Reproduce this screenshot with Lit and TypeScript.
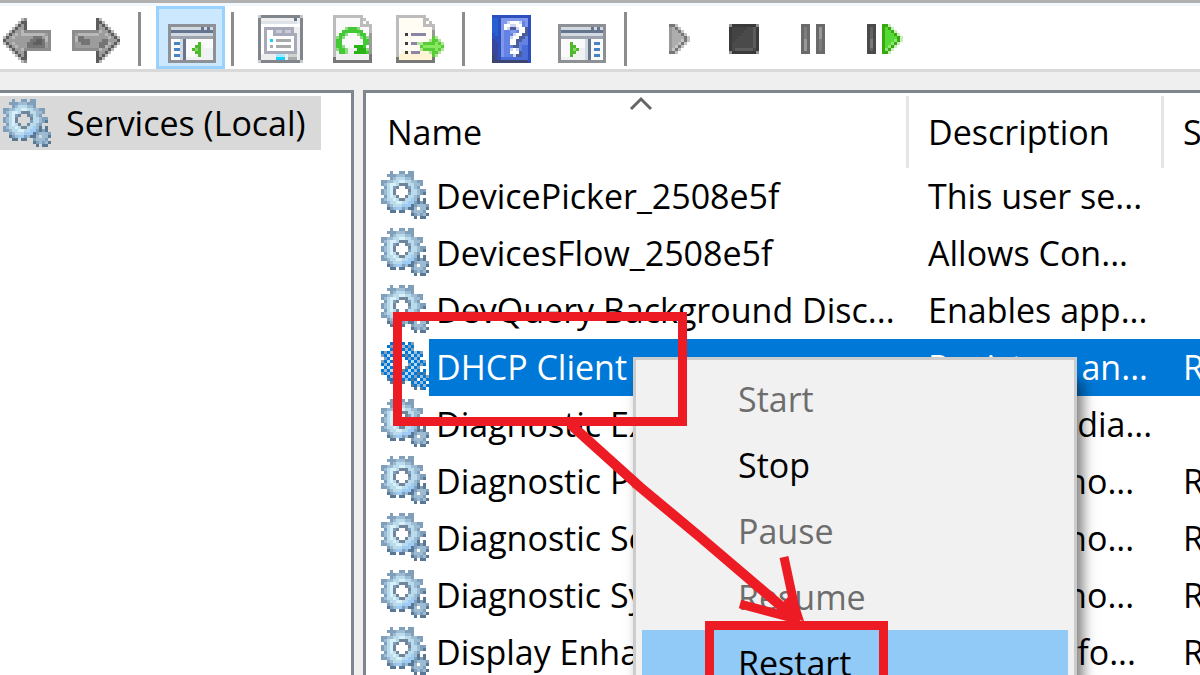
import { LitElement, html, svg, css } from "lit";
import { customElement, property, state } from "lit/decorators.js";
import { classMap } from "lit/directives/class-map.js";

type Sprite = { colors: Record<string, string>; rows: string[] };

const GEAR: Sprite = {
  colors: { o: "#7f9fbb", b: "#9dbcd4", c: "#badbec", w: "#d8f1f9", i: "#71859d", d: "#587896", s: "#9dcbf8" },
  rows: [
    "...o..oo.oo.....",
    "..ooobbbooo.....",
    "...obcccbbo.....",
    "oobbccwwccbboo..",
    "obcwwciiiccbbo..",
    ".ocwoi..iocbo...",
    "obcwi....iccboo.",
    "obcwi....occbod.",
    ".ocwci..iccbo...",
    "obccwciiccsbd.d.",
    "oobccwwccssodod.",
    "..obcccsssdobbbo",
    "..dobssobddb.bbd",
    "...dd.dd..obbbo.",
    "..........dobobd",
    "...........d.dd.",
  ],
};

const BACK: Sprite = {
  colors: { k: "#5c5c5c", g: "#8c8c8c", l: "#b8b8b8", m: "#9c9c9c", d: "#747474", x: "#5f5f5f" },
  rows: [
    "",
    "......lg........",
    ".....lkk........",
    "....lkmk........",
    "...lkmmk........",
    "..lkmmlggggggggg",
    ".lkmlmllllllllmg",
    "lkmlmmmmmmdddmlg",
    "kmmmmmmmmddxxdlg",
    "lkmlmmmmddxxxdmg",
    ".lkmlmmmddddddmg",
    "..lkmmlggggggggg",
    "...lkmmk........",
    "....lkmk........",
    ".....lkk........",
    "......lg........",
  ],
};

const FORWARD: Sprite = {
  colors: BACK.colors,
  rows: [
    "",
    "........kl......",
    "........kkl.....",
    "........kmkl....",
    "........kmmkl...",
    "ggggggggglmmkl..",
    "gmlllllllmmlmkl.",
    "glddmmmmmmmmlmkl",
    "glddddmmmmddmmmk",
    "gmmdddmmmdddlmkl",
    "gmmmmmmmmddlmkl.",
    "ggggggggglmmkl..",
    "........kmmkl...",
    "........kmkl....",
    "........kkl.....",
    "........kl......",
  ],
};

const TREE_PANE: Sprite = {
  colors: { g: "#8d9196", l: "#d3d9e1", n: "#66758f", m: "#9da3ad", w: "#fafafa", v: "#f0f1f2", b: "#4684c4", e: "#4fb92b", f: "#86d768" },
  rows: [
    "", "", "",
    "gggggggggggggggg",
    "gllllllllllnlnlg",
    "gnnnnnnnnnnnnnng",
    "gllllllllllllllg",
    "gmmmmmmmmmmmmmmg",
    "gwwwlnwwwwwwwwwg",
    "gwbblnwwwwewwwwg",
    "gwwwlnwwweevwwwg",
    "gwbblnwwefevvvvg",
    "gwwwlnwwweevvvvg",
    "gwbblnwwwvevvvvg",
    "gwwwlnvvvvvvvvvg",
    "gggggggggggggggg",
  ],
};

const ACTION_PANE: Sprite = {
  colors: TREE_PANE.colors,
  rows: [
    "", "", "",
    "gggggggggggggggg",
    "gllllllllllnlnlg",
    "gnnnnnnnnnnnnnng",
    "gllllllllllllllg",
    "gmmmmmmmmmmmmmmg",
    "gwwwwwwwwlnwwwwg",
    "gwwwewwwwlnwbbwg",
    "gwwweewwwlnwwwwg",
    "gwwwefevvlnwbbwg",
    "gwwweevvvlnwwwwg",
    "gwwwevvvvlnwbbwg",
    "gvvvvvvvvlnwwwwg",
    "gggggggggggggggg",
  ],
};

const PROPERTIES: Sprite = {
  colors: { g: "#80868c", c: "#c8cbcd", l: "#dde3e8", n: "#66758f", v: "#eeeeef", a: "#a7abb9", w: "#ffffff", t: "#c9ccd6", y: "#19d1ff", z: "#a9ecff", s: "#a9abab", q: "#d0d2d2" },
  rows: [
    "cgggggggggggggc.",
    "gvvvvvvvvvvvnvg.",
    "gllllllllllllvg.",
    "gwwwwwwwwwwwwwg.",
    "gwaaaaaaaaaavvg.",
    "gwawwattattavvg.",
    "gwawwaaaaaaaavg.",
    "gwawwwwwwwwwavg.",
    "gwawywssssswavg.",
    "gwawwwwwwwwwavg.",
    "gwawswssssswavg.",
    "gwawwwwwwwwwavg.",
    "gwaaaaaaaaaaavg.",
    "gvvvvvzzzvqqqvg.",
    "gvvvvvyyyvsssvg.",
    "cgggggggggggggc.",
  ],
};

const REFRESH: Sprite = {
  colors: { g: "#bcbcbc", h: "#9a9a9a", k: "#787878", w: "#fafafa", v: "#f0f0f0", e: "#43c936", f: "#8bdb80", d: "#27b414" },
  rows: [
    "..gggggggggg....",
    "..gwwwwwwwwgg...",
    "..gwwwwwwwwgwg..",
    "..gwwwwwwwwgggg.",
    "..gwwwfeeefwwwg.",
    "..gwweeeeeeewwg.",
    "..gweefwwwfeewh.",
    "..gfefwwwwwfefh.",
    "..geewwwwwwweeh.",
    "..geewwwwwwweeh.",
    "..geefwwwdddewh.",
    "..gfeefvvvdddfh.",
    "..gveefvvddddeh.",
    "..gvvvvvvvvvvvk.",
    "..kvvvvvvvvvvvk.",
    "..kkkkkkkkkkkkk.",
  ],
};

const EXPORT: Sprite = {
  colors: { g: "#bcbcbc", h: "#989898", k: "#787878", w: "#fffdf4", v: "#fff4d4", n: "#403c44", p: "#8b86a3", e: "#57cc36", f: "#86e95f", l: "#b2e59b" },
  rows: [
    "gggggggggg......",
    "gwwwwwwwwgg.....",
    "gwwwwwwwwgwg....",
    "gwwwwwwwwgggg...",
    "gwwwwwwwwwwwg...",
    "gwwwwwwwwwwwh...",
    "gwwnwpppppwwh...",
    "gwwwwwwwwwwwel..",
    "gwwwwwwwwwwleel.",
    "gwwnwpplleeeefel",
    "gwwwwwwweffffffe",
    "gwwwwwwwleeeefel",
    "gwvnvpppvvvleel.",
    "gvvvvvvvvvvvel..",
    "kvvvvvvvvvvvk...",
    "kkkkkkkkkkkkk...",
  ],
};

const HELP: Sprite = {
  colors: { a: "#2c4fbd", b: "#2860d3", c: "#36479b", d: "#3b456f", e: "#7f98ec", f: "#6482e3", g: "#4a6dd7", w: "#ffffff", v: "#ccd5f2", s: "#4c5d9a" },
  rows: [
    ".aaaaaaaaaaaaa..",
    ".bbaeeeeeeeeea..",
    ".bbaeevwwwvfea..",
    ".bbaewwvvwwfea..",
    ".bbaewvssvwwsa..",
    ".bbaeffeefwwsa..",
    ".abaefffvwwssa..",
    ".aaaeffvwwssfa..",
    ".caaeffwwssffa..",
    ".ccaeffwwsfffa..",
    ".ccaefffssfgga..",
    ".ccaeffvwvfgga..",
    ".ccaeffwwwsgga..",
    ".dcaefffvssgga..",
    ".dcaggggggggga..",
    ".dddddddddddda..",
  ],
};

const START: Sprite = {
  colors: { k: "#777777", g: "#999999", l: "#c4c4c4", m: "#adadad" },
  rows: [
    "", "", "",
    "......kkl.......",
    "......gmkl......",
    "......gmmkl.....",
    "......gmmmkl....",
    "......gmmmmkl...",
    "......gmmmlkl...",
    "......gmmlkl....",
    "......gmlkl.....",
    "......glkl......",
    "......kkl.......",
  ],
};

const STOP: Sprite = {
  colors: { c: "#929292", k: "#3a3a3a", d: "#434343", m: "#4a4a4a", l: "#5c5c5c" },
  rows: [
    "", "", "",
    "...ckkkkkkkkc...",
    "...kdddddmmlk...",
    "...kddddmmmlk...",
    "...kdddmmmmlk...",
    "...kddmmmmmlk...",
    "...kdmmmmmmlk...",
    "...kmmmmmmmlk...",
    "...kmmmmmmmlk...",
    "...kmllllllmk...",
    "...ckkkkkkkkc...",
  ],
};

const PAUSE: Sprite = {
  colors: { k: "#6a6a6a", m: "#7d7d7d", l: "#999999" },
  rows: [
    "", "", "",
    "....kkk..kkk....",
    "....kmk..klk....",
    "....kmk..klk....",
    "....kmk..klk....",
    "....kmk..klk....",
    "....klk..kmk....",
    "....klk..kmk....",
    "....klk..kmk....",
    "....klk..kmk....",
    "....kkk..kkk....",
  ],
};

const RESTART: Sprite = {
  colors: { k: "#4a4a4a", m: "#636363", l: "#7b7b7b", d: "#37a90b", e: "#55d936", f: "#8fe477", h: "#c8edbd" },
  rows: [
    "", "", "",
    "...kkk..ddh.....",
    "...kmk..dedh....",
    "...kmk..deedh...",
    "...kmk..deeedh..",
    "...kmk..deeeedh.",
    "...klk..deeefdh.",
    "...klk..deefdh..",
    "...klk..defdh...",
    "...kmk..dfdh....",
    "...kkk..ddh.....",
  ],
};

@customElement("pixel-icon")
class PixelIcon extends LitElement {
  @property({ attribute: false }) sprite!: Sprite;
  @property({ type: Boolean }) dithered = false;

  static styles = css`
    :host { display: block; flex: none; width: 48px; height: 48px; }
    .art { display: block; width: 100%; height: 100%; }
  `;

  render() {
    const cells = this.sprite.rows.flatMap((row, y) =>
      [...row].map((key, x) => {
        if (key === ".") return null;
        const fill = this.dithered && (x + y) % 2 ? "#0078d7" : this.sprite.colors[key];
        return svg`<rect x=${x} y=${y} width="1" height="1" fill=${fill}></rect>`;
      })
    );
    return html`<svg class="art" viewBox="0 0 16 16" shape-rendering="crispEdges" aria-hidden="true">${cells}</svg>`;
  }
}

@customElement("tool-bar")
class ToolBar extends LitElement {
  static styles = css`
    :host {
      display: flex;
      flex: none;
      height: 63px;
      overflow: hidden;
      background: #fff;
      border-top: 3px solid #f3f8fd;
      border-bottom: 3px solid #d9d9d9;
    }
    .tools { display: flex; flex: none; margin-left: -9px; }
    .tool {
      display: flex;
      box-sizing: border-box;
      width: 69px;
      height: 63px;
      padding: 6px 9px;
      border: 3px solid transparent;
      background: none;
    }
    .pressed { margin: 0 -3px 0 3px; border-color: #99d1ff; background: #cce8ff; }
    .divider { width: 3px; height: 54px; margin: 6px 12px 0 9px; background: #8c8c8c; }
  `;

  private tool(label: string, sprite: Sprite, pressed = false) {
    return html`<button class=${classMap({ tool: true, pressed })} aria-label=${label}>
      <pixel-icon .sprite=${sprite}></pixel-icon>
    </button>`;
  }

  render() {
    const divider = html`<span class="divider"></span>`;
    return html`<div class="tools">
      ${this.tool("Back", BACK)}${this.tool("Forward", FORWARD)}${divider}
      ${this.tool("Show/Hide Console Tree", TREE_PANE, true)}${divider}
      ${this.tool("Properties", PROPERTIES)}${this.tool("Refresh", REFRESH)}${this.tool("Export List", EXPORT)}${divider}
      ${this.tool("Help", HELP)}${this.tool("Show/Hide Action Pane", ACTION_PANE)}${divider}
      ${this.tool("Start Service", START)}${this.tool("Stop Service", STOP)}${this.tool("Pause Service", PAUSE)}${this.tool("Restart Service", RESTART)}
    </div>`;
  }
}

type Service = { name: string; description: string; status?: string };

const SERVICES: Service[] = [
  { name: "DevicePicker_2508e5f", description: "This user se..." },
  { name: "DevicesFlow_2508e5f", description: "Allows Con..." },
  { name: "DevQuery Background Disc...", description: "Enables app..." },
  { name: "DHCP Client", description: "Registers an...", status: "Running" },
  { name: "Diagnostic Execution Ser...", description: "Executes dia..." },
  { name: "Diagnostic Policy Service", description: "The Diagno...", status: "Running" },
  { name: "Diagnostic Service Host", description: "The Diagno...", status: "Running" },
  { name: "Diagnostic System Host", description: "The Diagno...", status: "Running" },
  { name: "Display Enhancement Ser...", description: "A service fo...", status: "Running" },
];

@customElement("service-list")
class ServiceList extends LitElement {
  @state() private selected = "DHCP Client";

  static styles = css`
    :host { display: block; overflow: hidden; background: #fff; border: 3px solid #80868e; border-width: 3px 0 0 3px; }
    .grid { width: 100%; min-width: 960px; margin-top: 3px; table-layout: fixed; border-collapse: separate; border-spacing: 0; }
    .col-name { width: 543px; }
    .col-description { width: 255px; }
    .head {
      position: relative;
      box-sizing: border-box;
      height: 72px;
      padding: 0 0 0 19px;
      border-right: 3px solid #e5e5e5;
      font-weight: 400;
      text-align: left;
    }
    .head:first-child { padding-left: 21px; }
    .sort { position: absolute; top: 0; right: 0; left: 9px; width: 24px; height: 15px; margin: 0 auto; }
    .cell { height: 57px; padding: 0 0 0 19px; line-height: 57px; white-space: nowrap; overflow: hidden; }
    .cell:first-child { padding: 0 0 0 15px; }
    .entry { display: flex; }
    .gear { padding-top: 3px; }
    .name { flex: 1; padding-left: 7px; }
    .selected .name, .selected .cell:not(:first-child) { background: #0078d7; color: #fff; }
  `;

  render() {
    return html`<table class="grid">
      <colgroup><col class="col-name" /><col class="col-description" /><col /></colgroup>
      <thead>
        <tr>
          <th class="head" scope="col">Name
            <svg class="sort" viewBox="0 0 24 15" aria-hidden="true">
              <path d="M2 13 L12 3 L22 13" fill="none" stroke="#666" stroke-width="3"></path>
            </svg>
          </th>
          <th class="head" scope="col">Description</th>
          <th class="head" scope="col">Status</th>
        </tr>
      </thead>
      <tbody>
        ${SERVICES.map((s) => html`<tr class=${classMap({ selected: s.name === this.selected })} @click=${() => (this.selected = s.name)}>
          <td class="cell"><div class="entry">
            <pixel-icon class="gear" .sprite=${GEAR} ?dithered=${s.name === this.selected}></pixel-icon>
            <span class="name">${s.name}</span>
          </div></td>
          <td class="cell">${s.description}</td>
          <td class="cell">${s.status ?? ""}</td>
        </tr>`)}
      </tbody>
    </table>`;
  }
}

@customElement("context-menu")
class ContextMenu extends LitElement {
  static styles = css`
    :host {
      display: block;
      box-sizing: border-box;
      width: 444px;
      padding: 6px;
      background: #f1f1f1;
      border: 3px solid #ccc;
      box-shadow: 6px 24px 12px rgba(0, 0, 0, 0.5);
    }
    .item {
      display: block;
      width: 100%;
      height: 66px;
      padding: 0 0 0 96px;
      border: 0;
      background: none;
      color: #000;
      font: inherit;
      text-align: left;
    }
    .item:disabled { color: #6d6d6d; }
    .active { background: #91c9f7; }
  `;

  render() {
    return html`
      <button class="item" disabled>Start</button>
      <button class="item">Stop</button>
      <button class="item" disabled>Pause</button>
      <button class="item" disabled>Resume</button>
      <button class="item active">Restart</button>
    `;
  }
}

@customElement("app-root")
class AppRoot extends LitElement {
  static styles = css`
    :host {
      position: relative;
      display: flex;
      flex-direction: column;
      box-sizing: border-box;
      height: 100vh;
      overflow: hidden;
      border-top: 3px solid #b1b1b1;
      background: #efefef;
      color: #000;
      font: 34px/48px "Open Sans", "Noto Sans", sans-serif;
    }
    .body { display: flex; flex: 1; gap: 9px; min-height: 0; padding-top: 18px; }
    .tree { flex: none; box-sizing: border-box; width: 354px; padding-top: 3px; background: #fff; border: 3px solid #80868e; border-width: 3px 3px 0 0; }
    .node {
      display: flex;
      width: 321px;
      box-sizing: border-box;
      padding: 3px;
      background: #d9d9d9;
      color: inherit;
      text-decoration: none;
      white-space: nowrap;
      gap: 15px;
    }
    .list { flex: 1; min-width: 0; }
    .menu { position: absolute; top: 354px; bottom: -24px; left: 633px; }
    .marks { position: absolute; top: -3px; left: 0; width: 100%; height: calc(100% + 3px); pointer-events: none; }
  `;

  render() {
    return html`
      <tool-bar></tool-bar>
      <div class="body">
        <nav class="tree">
          <a class="node" href="#services"><pixel-icon .sprite=${GEAR}></pixel-icon><span>Services (Local)</span></a>
        </nav>
        <service-list class="list"></service-list>
      </div>
      <context-menu class="menu"></context-menu>
      <svg class="marks" fill="none" stroke="#ed1c24" stroke-width="9" aria-hidden="true">
        <rect x="397.5" y="316.5" width="285" height="105"></rect>
        <rect x="709.5" y="625.5" width="174" height="105"></rect>
        <path d="M570 424 L640 487 L700 537 L795 618" stroke-width="10"></path>
        <path d="M784 557 L797 618"></path>
        <path d="M740 604 L800 620"></path>
        <path d="M771 616 L794 590 L804 621 Z" fill="#ed1c24" stroke="none"></path>
      </svg>
    `;
  }
}
